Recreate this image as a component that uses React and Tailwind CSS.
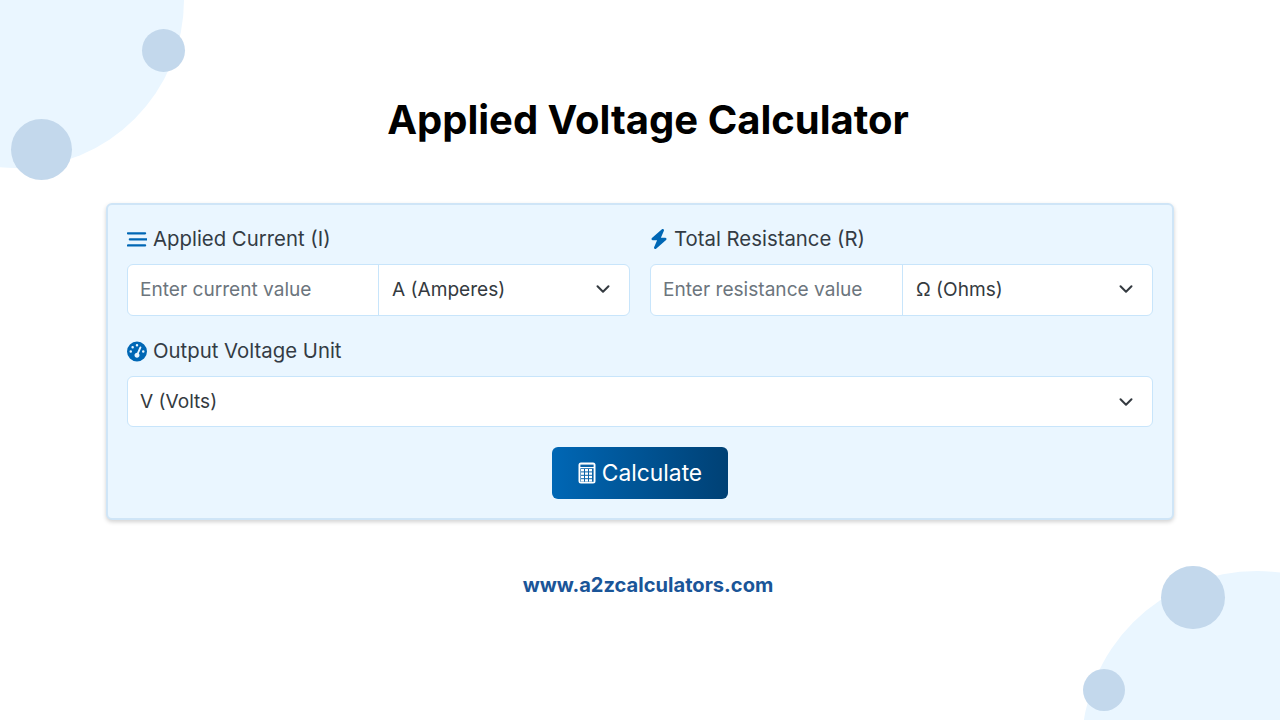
import React from "react";
import { FaBolt, FaGaugeHigh } from "react-icons/fa6";

function Chevron() {
  return (
    <svg width="16" height="16" viewBox="0 0 16 16" fill="none" className="shrink-0">
      <path d="M2.5 5.2 8 10.7l5.5-5.5" stroke="#343a40" strokeWidth="2" strokeLinecap="round" strokeLinejoin="round" />
    </svg>
  );
}

function BarsIcon() {
  return (
    <svg width="21" height="16" viewBox="0 0 21 16" fill="none">
      <path d="M1 2h18M3 8.4h18M1 14.8h18" stroke="currentColor" strokeWidth="2.4" strokeLinecap="round" />
    </svg>
  );
}

function CalcIcon() {
  const cells = [];
  for (let r = 0; r < 4; r++) {
    for (let c = 0; c < 3; c++) {
      cells.push(<rect key={`${r}-${c}`} x={3 + c * 4} y={7 + r * 3.4} width="3" height="2.4" fill="#ffffff" />);
    }
  }
  return (
    <svg width="18" height="22" viewBox="0 0 18 22">
      <rect x="0.5" y="0.5" width="17" height="21" rx="2.5" fill="#ffffff" />
      <rect x="2.4" y="2.6" width="13.2" height="2.4" fill="#0a63a8" />
      <rect x="2.4" y="6.2" width="13.2" height="13.6" fill="#0a63a8" />
      {cells}
    </svg>
  );
}

function Label({ icon, children, gap = "gap-[6px]", iconBox = "w-[21px]" }) {
  return (
    <div className={`h-[30px] mb-[10px] flex items-center ${gap} text-[20.35px] text-[#333b44]`}>
      <span className={`text-[#0067b5] flex items-center justify-center shrink-0 ${iconBox}`}>{icon}</span>
      <span className="pt-[1px]">{children}</span>
    </div>
  );
}

function Field({ icon, label, placeholder, unit, inputWidth, iconBox }) {
  return (
    <div>
      <Label icon={icon} iconBox={iconBox}>{label}</Label>
      <div className="flex h-[52px] rounded-[6px] border border-[#c8e5fb] bg-white text-[19.1px]">
        <input
          readOnly
          placeholder={placeholder}
          className={`${inputWidth} px-[12px] pb-[2px] border-r border-[#c8e5fb] bg-transparent outline-none rounded-l-[6px] placeholder:text-[#6c757d]`}
        />
        <div className="flex-1 flex items-center justify-between pl-[13px] pr-[18px] pb-[2px] text-[#343a40]">
          <span>{unit}</span>
          <Chevron />
        </div>
      </div>
    </div>
  );
}

export default function App() {
  return (
    <div className="relative w-[1280px] h-[720px] overflow-hidden bg-white font-['Inter',sans-serif]">
      <div className="absolute left-[-152px] top-[-168px] w-[336px] h-[336px] rounded-full bg-[#eaf6ff]" />
      <div className="absolute left-[142px] top-[29px] w-[43px] h-[43px] rounded-full bg-[#c3d8ec]" />
      <div className="absolute left-[11px] top-[119px] w-[61px] h-[61px] rounded-full bg-[#c3d8ec]" />
      <div className="absolute left-[1082px] top-[571px] w-[350px] h-[350px] rounded-full bg-[#eaf6ff]" />
      <div className="absolute left-[1161px] top-[566px] w-[64px] h-[63px] rounded-full bg-[#c3d8ec]" />
      <div className="absolute left-[1083px] top-[669px] w-[42px] h-[42px] rounded-full bg-[#c3d8ec]" />

      <div className="relative flex flex-col items-center">
        <h1 className="mt-[92px] h-[56px] pl-[16px] leading-[56px] text-[40px] font-bold text-black">
          Applied Voltage Calculator
        </h1>

        <div className="mt-[55px] w-[1068px] h-[317px] rounded-[6px] border-2 border-[#cfe5f7] bg-[#eaf6ff] px-[19px] pt-[19px] shadow-[0_2px_4px_rgba(0,0,0,0.18)]">
          <div className="grid grid-cols-2 gap-x-[20px]">
            <Field icon={<BarsIcon />} label="Applied Current (I)" placeholder="Enter current value" unit="A (Amperes)" inputWidth="w-[251px]" iconBox="w-[20px]" />
            <Field icon={<FaBolt size={20} />} label="Total Resistance (R)" placeholder="Enter resistance value" unit="Ω (Ohms)" inputWidth="w-[252px]" iconBox="w-[18px]" />
          </div>
          <div className="mt-[20px]">
            <Label icon={<FaGaugeHigh size={21} />} iconBox="w-[20px]">Output Voltage Unit</Label>
            <div className="h-[51px] rounded-[6px] border border-[#c8e5fb] bg-white flex items-center justify-between pl-[12px] pr-[18px] text-[19.1px] text-[#343a40]">
              <span>V (Volts)</span>
              <Chevron />
            </div>
          </div>
          <div className="mt-[20px] flex justify-center">
            <button className="w-[176px] h-[52px] rounded-[6px] bg-gradient-to-r from-[#0067b5] to-[#004175] text-white text-[22.8px] flex items-center justify-center gap-[6px]">
              <CalcIcon />
              <span>Calculate</span>
            </button>
          </div>
        </div>

        <div className="mt-[50px] pl-[16px] text-[20.1px] font-bold text-[#1a5598] leading-[30px]">
          www.a2zcalculators.com
        </div>
      </div>
    </div>
  );
}
